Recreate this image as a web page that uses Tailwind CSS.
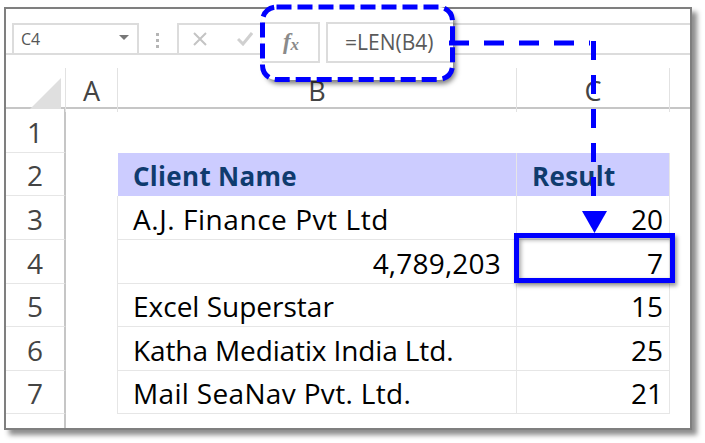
<!DOCTYPE html>
<html lang="en">
<head>
  <meta charset="UTF-8" />
  <title>LEN formula</title>
  <script src="https://cdn.jsdelivr.net/npm/@tailwindcss/browser@4"></script>
</head>
<body class="bg-white w-[705px] h-[443px] overflow-hidden font-['Open_Sans',sans-serif] text-black">
  <div class="relative w-[705px] h-[443px] pt-[7px] pl-[4px]">
    <!-- sheet frame -->
    <div class="w-[688px] h-[423px] bg-white border-[2px] border-[#7f7f7f] shadow-[5px_5px_5px_rgba(0,0,0,0.45)] overflow-hidden">

      <!-- formula bar -->
      <div class="h-[46px] flex items-start border-b-2 border-[#dcdcdc]">
        <div class="ml-[6px] mt-[14px] w-[127px] h-[32px] border-2 border-[#dcdcdc] flex items-center justify-between pl-[7px] pr-[8px] text-[16px] text-[#555]">
          <span>C4</span>
          <span class="w-0 h-0 mb-[3px] border-l-[5px] border-r-[5px] border-t-[5px] border-l-transparent border-r-transparent border-t-[#777]"></span>
        </div>
        <div class="ml-[17px] mt-[24px] flex flex-col gap-[3px]">
          <span class="w-[3px] h-[3px] bg-[#b5b5b5]"></span>
          <span class="w-[3px] h-[3px] bg-[#b5b5b5]"></span>
          <span class="w-[3px] h-[3px] bg-[#b5b5b5]"></span>
        </div>
        <div class="ml-[18px] mt-[14px] w-[100px] h-[32px] border-2 border-r-0 border-[#dcdcdc] flex items-center pl-[14px] gap-[30px]">
          <svg width="14" height="14" viewBox="0 0 14 14" fill="none" stroke="#c4c4c4" stroke-width="2"><path d="M1 1l12 12M13 1L1 13"/></svg>
          <svg width="16" height="14" viewBox="0 0 16 14" fill="none" stroke="#d0d0d0" stroke-width="3"><path d="M1 7l5 5L15 1"/></svg>
        </div>
        <div class="flex-1 h-[16px] border-b-2 border-[#dcdcdc]"></div>
      </div>
      <div class="h-[13px]"></div>

      <!-- column headers -->
      <div class="grid grid-cols-[60px_52px_399px_153px_1fr] h-[41px] border-b-2 border-[#c6c6c6] text-[27px] text-[#444]">
        <div class="relative border-r border-[#e2e2e2]">
          <span class="absolute right-[4px] bottom-[3px] w-0 h-0 border-l-[31px] border-b-[31px] border-l-transparent border-b-[#dfdfdf]"></span>
        </div>
        <div class="flex items-center justify-center pt-[3px] border-r border-[#e2e2e2]">A</div>
        <div class="flex items-center justify-center pt-[3px] border-r border-[#e2e2e2]">B</div>
        <div class="flex items-center justify-center pt-[3px] border-r border-[#e2e2e2]">C</div>
        <div></div>
      </div>

      <!-- rows -->
      <div class="grid grid-cols-[60px_52px_399px_153px_1fr] grid-rows-[44px_43px_44px_44px_43px_44px_43px_14px] text-[28px]">
        <div class="flex items-center justify-center pt-[2px] border-r-2 border-b border-[#c6c6c6] border-b-[#e6e6e6] text-[#444]">1</div>
        <div class="col-span-4"></div>

        <div class="flex items-center justify-center pt-[2px] border-r-2 border-b border-[#c6c6c6] border-b-[#e6e6e6] text-[#444]">2</div>
        <div></div>
        <div class="bg-[#ccccff] flex items-center pl-[15px] pt-[4px] text-[26px] tracking-[0.3px] font-bold text-[#0f3b6e] border-r border-[#e6e6e6]">Client Name</div>
        <div class="bg-[#ccccff] flex items-center pl-[15px] pt-[4px] text-[26px] tracking-[0.3px] font-bold text-[#0f3b6e] border-r border-[#e6e6e6]">Result</div>
        <div></div>

        <div class="flex items-center justify-center pt-[2px] border-r-2 border-b border-[#c6c6c6] border-b-[#e6e6e6] text-[#444]">3</div>
        <div class="border-r border-[#e6e6e6]"></div>
        <div class="flex items-center pl-[15px] pt-[2px] tracking-[0.55px] border-r border-b border-[#e6e6e6]">A.J. Finance Pvt Ltd</div>
        <div class="flex items-center justify-end pr-[6px] pt-[2px] border-r border-b border-[#e6e6e6]">20</div>
        <div></div>

        <div class="flex items-center justify-center pt-[2px] border-r-2 border-b border-[#c6c6c6] border-b-[#e6e6e6] text-[#444]">4</div>
        <div class="border-r border-[#e6e6e6]"></div>
        <div class="flex items-center justify-end pr-[15px] pt-[2px] tracking-[0.2px] border-r border-b border-[#e6e6e6]">4,789,203</div>
        <div class="flex items-center justify-end pr-[6px] pt-[2px] border-r border-b border-[#e6e6e6]">7</div>
        <div></div>

        <div class="flex items-center justify-center pt-[2px] border-r-2 border-b border-[#c6c6c6] border-b-[#e6e6e6] text-[#444]">5</div>
        <div class="border-r border-[#e6e6e6]"></div>
        <div class="flex items-center pl-[15px] pt-[2px] border-r border-b border-[#e6e6e6]">Excel Superstar</div>
        <div class="flex items-center justify-end pr-[6px] pt-[2px] border-r border-b border-[#e6e6e6]">15</div>
        <div></div>

        <div class="flex items-center justify-center pt-[2px] border-r-2 border-b border-[#c6c6c6] border-b-[#e6e6e6] text-[#444]">6</div>
        <div class="border-r border-[#e6e6e6]"></div>
        <div class="flex items-center pl-[15px] pt-[2px] tracking-[-0.12px] border-r border-b border-[#e6e6e6]">Katha Mediatix India Ltd.</div>
        <div class="flex items-center justify-end pr-[6px] pt-[2px] border-r border-b border-[#e6e6e6]">25</div>
        <div></div>

        <div class="flex items-center justify-center pt-[2px] border-r-2 border-b border-[#c6c6c6] border-b-[#e6e6e6] text-[#444]">7</div>
        <div class="border-r border-[#e6e6e6]"></div>
        <div class="flex items-center pl-[15px] pt-[2px] tracking-[0.33px] border-r border-b border-[#e6e6e6]">Mail SeaNav Pvt. Ltd.</div>
        <div class="flex items-center justify-end pr-[6px] pt-[2px] border-r border-b border-[#e6e6e6]">21</div>
        <div></div>

        <div class="border-r-2 border-[#c6c6c6]"></div>
        <div class="col-span-4"></div>
      </div>
    </div>

    <!-- callout over the formula bar -->
    <div class="absolute left-[262px] top-[7px] w-[191px] h-[73px] bg-white rounded-[14px] flex items-center gap-[6px] pb-[2px] overflow-hidden shadow-[3px_4px_5px_rgba(0,0,0,0.5)]">
      <div class="w-[58px] h-[41px] border-2 border-l-0 border-[#dcdcdc] flex items-center justify-center pl-[2px] font-['Liberation_Serif',serif] italic font-bold text-[23px] text-[#8a8a8a]">f<span class="text-[17px] mt-[5px]">x</span></div>
      <div class="flex-1 h-[41px] border-2 border-r-0 border-[#dcdcdc] flex items-center pl-[17px] text-[21px] text-[#5a5a5a]">=LEN(B4)</div>
    </div>
    <svg class="absolute left-0 top-0" width="705" height="443" fill="none" stroke="#0000ff">
      <rect x="262.500" y="7" width="190" height="72.500" rx="14" stroke-width="5" stroke-dasharray="15 6"/>
      <path d="M449 43H590" stroke-width="5" stroke-dasharray="20 15"/>
      <path d="M593.500 41V198" stroke-width="5" stroke-dasharray="19 15"/>
      <path d="M582 211h25l-12.500 22z" fill="#0000ff" stroke="none"/>
    </svg>

    <!-- highlighted result cell -->
    <div class="absolute left-[514px] top-[233px] w-[161px] h-[50px] border-[5px] border-[#0000ff] shadow-[2px_3px_4px_rgba(0,0,0,0.4),inset_2px_2px_4px_rgba(0,0,0,0.35)]"></div>
  </div>
</body>
</html>
